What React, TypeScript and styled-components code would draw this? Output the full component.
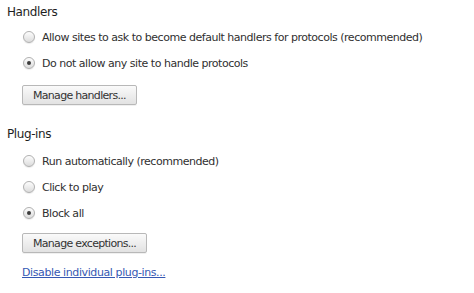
import React from "react";
import styled, { createGlobalStyle } from "styled-components";

const Global = createGlobalStyle`
  html, body { margin: 0; padding: 0; background: #fff; }
  body { font-family: "DejaVu Sans", "Noto Sans", sans-serif; color: #303030; }
`;

const Page = styled.div`
  padding: 2px 0 0 7px;
  display: flex;
  flex-direction: column;
`;

const Heading = styled.h3<{ $after: number }>`
  margin: 0 0 ${(p) => p.$after}px;
  font-size: 12px;
  letter-spacing: -0.4px;
  font-weight: normal;
  color: #1e1e1e;
  height: 20px;
  line-height: 20px;
`;

const Section = styled.section<{ $gap?: number }>`
  display: flex;
  flex-direction: column;
  margin-bottom: ${(p) => p.$gap ?? 0}px;
`;

const Body = styled.div`
  padding-left: 15px;
  display: flex;
  flex-direction: column;
`;

const RadioRow = styled.label`
  display: flex;
  align-items: center;
  height: 26px;
  font-size: 11px;
  letter-spacing: -0.48px;
  color: #303030;
`;

const RadioCircle = styled.span<{ $checked?: boolean }>`
  width: 12px;
  height: 12px;
  box-sizing: border-box;
  border-radius: 50%;
  border: 1px solid #b0b0b0;
  background: linear-gradient(#fdfdfd, #dcdcdc);
  margin-left: 1px;
  margin-right: 7px;
  display: flex;
  align-items: center;
  justify-content: center;
  box-shadow: 0 1px 1px rgba(0, 0, 0, 0.08);
  &::after {
    content: "";
    display: ${(p) => (p.$checked ? "block" : "none")};
    width: 4px;
    height: 4px;
    border-radius: 50%;
    background: #3c3c3c;
  }
`;

const Button = styled.button<{ $top: number }>`
  align-self: flex-start;
  height: 20px;
  margin-top: ${(p) => p.$top}px;
  padding: 0 10px;
  font-family: inherit;
  font-size: 11px;
  letter-spacing: -0.7px;
  color: #333;
  border: 1px solid #b8b8b8;
  border-radius: 2px;
  background: linear-gradient(#fafafa, #e2e2e2);
  box-shadow: 0 1px 0 rgba(0, 0, 0, 0.06);
`;

const Link = styled.a`
  margin-top: 13px;
  line-height: 14px;
  font-size: 11px;
  letter-spacing: -0.4px;
  color: #3558b3;
  text-decoration: underline;
  cursor: pointer;
`;

const Radio = ({ label, checked }: { label: string; checked?: boolean }) => (
  <RadioRow>
    <RadioCircle $checked={checked} />
    {label}
  </RadioRow>
);

export default function App() {
  return (
    <>
      <Global />
      <Page>
        <Section $gap={19}>
          <Heading $after={2}>Handlers</Heading>
          <Body>
            <Radio label="Allow sites to ask to become default handlers for protocols (recommended)" />
            <Radio label="Do not allow any site to handle protocols" checked />
            <Button $top={9}>Manage handlers...</Button>
          </Body>
        </Section>
        <Section>
          <Heading $after={4}>Plug-ins</Heading>
          <Body>
            <Radio label="Run automatically (recommended)" />
            <Radio label="Click to play" />
            <Radio label="Block all" checked />
            <Button $top={7}>Manage exceptions...</Button>
            <Link>Disable individual plug-ins...</Link>
          </Body>
        </Section>
      </Page>
    </>
  );
}
